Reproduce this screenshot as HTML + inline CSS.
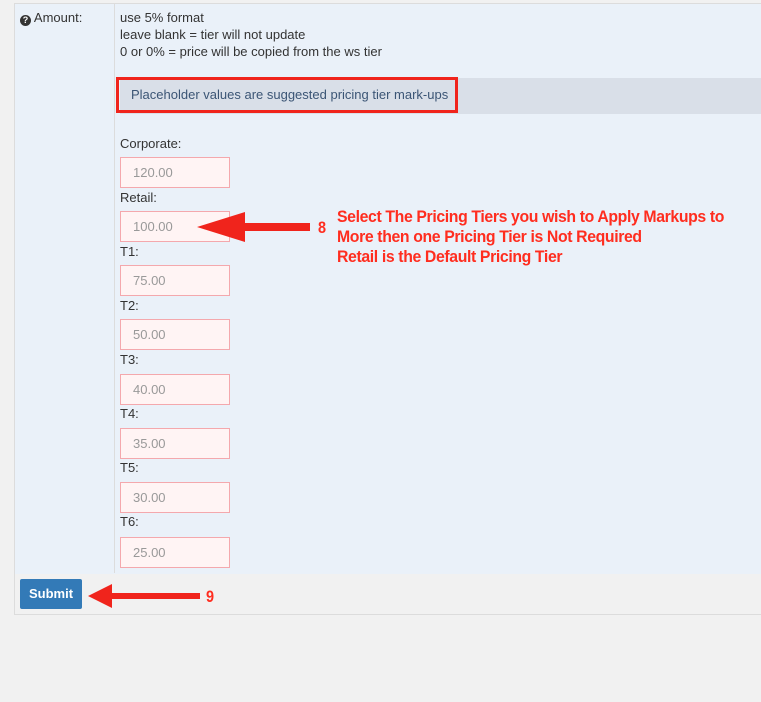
<!DOCTYPE html>
<html><head><meta charset="utf-8"><style>
body{margin:0;width:761px;height:702px;background:#f1f1f1;font-family:"Liberation Sans",sans-serif;position:relative;overflow:hidden;font-size:13px;color:#333}
.abs{position:absolute}
.row{left:14px;top:3px;width:747px;height:570px;background:#eaf1f9;border-top:1px solid #dcdcdc;border-left:1px solid #dcdcdc;border-bottom:1px solid #dcdcdc}
.div{left:114px;top:4px;width:1px;height:569px;background:#dcdcdc}
.foot{left:14px;top:574px;width:747px;height:40px;border-left:1px solid #dcdcdc;border-bottom:1px solid #dcdcdc;background:#f1f1f1}
.lbl{left:20px;top:10px}
.t{left:120px;line-height:17px}
.inp{left:120px;width:108px;height:29px;border:1px solid #f4a8ad;background:#fff4f4;color:#999;font-size:13px;line-height:29px;box-sizing:content-box;text-indent:12px}
.red{color:#ff2d1f;font-family:"Liberation Sans Narrow","Liberation Sans",sans-serif;font-weight:bold;font-size:17px;line-height:20px;letter-spacing:-0.4px;transform-origin:0 0}
</style></head><body>
<div class="abs row"></div>
<div class="abs div"></div>
<div class="abs foot"></div>
<div class="abs lbl"><span style="display:inline-block;width:11px;height:11px;border-radius:50%;background:#333;color:#fff;font-size:9px;font-weight:bold;text-align:center;line-height:11px;vertical-align:-1px">?</span> Amount:</div>
<div class="abs t" style="top:9px">use 5% format<br>leave blank = tier will not update<br>0 or 0% = price will be copied from the ws tier</div>
<div class="abs" style="left:120px;top:78px;width:641px;height:36px;background:#d9dfe8"></div>
<div class="abs" style="left:116px;top:77px;width:336px;height:30px;border:3px solid #f0241c;color:#3b5575;line-height:30px;text-indent:12px">Placeholder values are suggested pricing tier mark-ups</div>
<div class="abs t" style="top:135px">Corporate:</div>
<div class="abs inp" style="top:157px">120.00</div>
<div class="abs t" style="top:189px">Retail:</div>
<div class="abs inp" style="top:211px">100.00</div>
<div class="abs t" style="top:243px">T1:</div>
<div class="abs inp" style="top:265px">75.00</div>
<div class="abs t" style="top:297px">T2:</div>
<div class="abs inp" style="top:319px">50.00</div>
<div class="abs t" style="top:351px">T3:</div>
<div class="abs inp" style="top:374px">40.00</div>
<div class="abs t" style="top:405px">T4:</div>
<div class="abs inp" style="top:428px">35.00</div>
<div class="abs t" style="top:459px">T5:</div>
<div class="abs inp" style="top:482px">30.00</div>
<div class="abs t" style="top:513px">T6:</div>
<div class="abs inp" style="top:537px">25.00</div>
<div class="abs" style="left:20px;top:579px;width:62px;height:30px;background:#337ab7;border-radius:2px;color:#fff;font-weight:bold;line-height:30px;text-align:center">Submit</div>
<svg class="abs" style="left:0;top:0" width="761" height="702">
<polygon points="197,227 245,212 245,223 310,223 310,231 245,231 245,242" fill="#f0241c"/>
<polygon points="88,596 112,584 112,593 200,593 200,599 112,599 112,608" fill="#f0241c"/>
</svg>
<div class="abs red" style="left:318px;top:218px;transform:scaleX(0.85)">8</div>
<div class="abs red" style="left:206px;top:587px;transform:scaleX(0.85)">9</div>
<div class="abs red" style="left:337px;top:207px;white-space:nowrap;transform:scaleX(0.93)">Select The Pricing Tiers you wish to Apply Markups to<br>More then one Pricing Tier is Not Required<br>Retail is the Default Pricing Tier</div>
</body></html>
